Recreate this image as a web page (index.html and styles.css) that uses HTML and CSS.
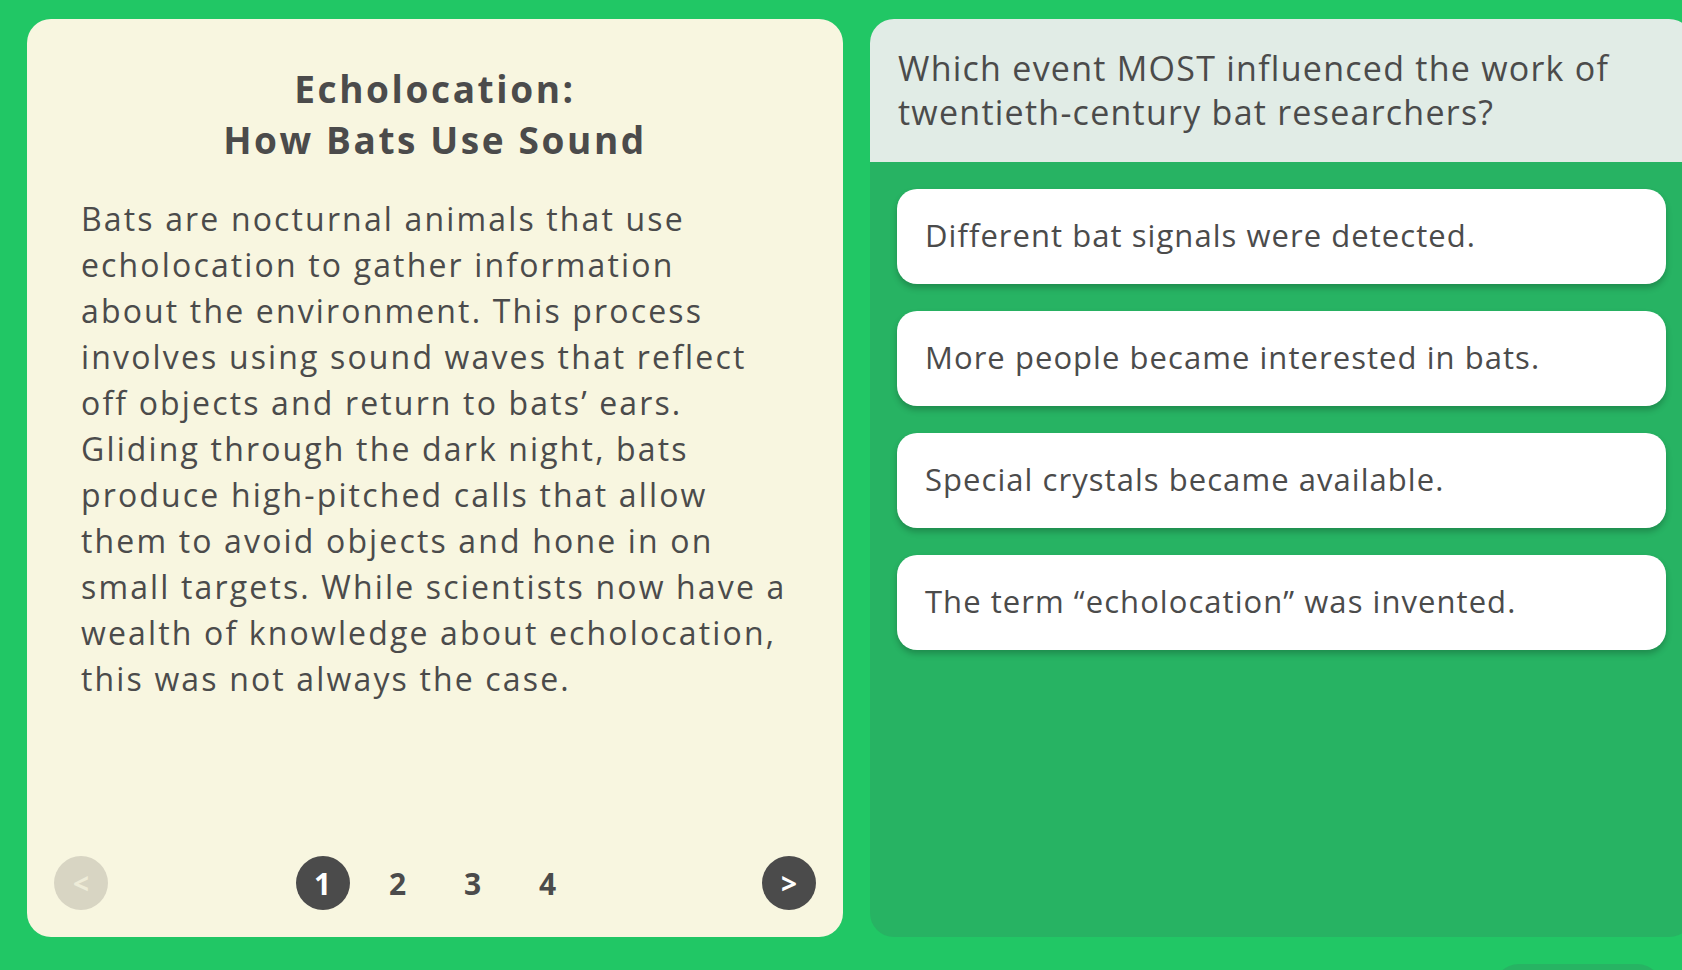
FILE: index.html
```html
<!DOCTYPE html>
<html lang="en">
<head>
<meta charset="utf-8">
<title>Echolocation: How Bats Use Sound</title>
<link rel="stylesheet" href="styles.css">
</head>
<body>
<div class="page">
  <div class="columns">
    <section class="passage">
      <h1 class="passage-title">Echolocation:<br>How Bats Use Sound</h1>
      <p class="passage-text">Bats are nocturnal animals that use<br>echolocation to gather information<br>about the environment. This process<br>involves using sound waves that reflect<br>off objects and return to bats’ ears.<br>Gliding through the dark night, bats<br>produce high-pitched calls that allow<br>them to avoid objects and hone in on<br>small targets. While scientists now have a<br>wealth of knowledge about echolocation,<br>this was not always the case.</p>
      <nav class="pager">
        <button class="pager-arrow pager-arrow--disabled" type="button">&lt;</button>
        <div class="pager-pages">
          <span class="pager-page pager-page--active">1</span>
          <span class="pager-page">2</span>
          <span class="pager-page">3</span>
          <span class="pager-page">4</span>
        </div>
        <button class="pager-arrow" type="button">&gt;</button>
      </nav>
    </section>
    <section class="quiz">
      <div class="quiz-question">Which event MOST influenced the work of twentieth-century bat researchers?</div>
      <div class="quiz-answers">
        <div class="answer">Different bat signals were detected.</div>
        <div class="answer">More people became interested in bats.</div>
        <div class="answer">Special crystals became available.</div>
        <div class="answer">The term “echolocation” was invented.</div>
      </div>
    </section>
  </div>
  <div class="footer">
    <div class="footer-button"></div>
  </div>
</div>
</body>
</html>
```
FILE: styles.css
```css
html, body {
  margin: 0;
  padding: 0;
  overflow: hidden;
}
body {
  background: #21c765;
  font-family: "Open Sans", "Noto Sans", sans-serif;
  color: #4b4b4b;
}
.page {
  display: flex;
  flex-direction: column;
  gap: 27px;
  padding: 19px 27px;
}
.columns {
  display: flex;
  gap: 27px;
}
.passage {
  flex: none;
  width: 816px;
  height: 918px;
  box-sizing: border-box;
  background: #f8f6e0;
  border-radius: 24px;
  padding: 27px;
  display: flex;
  flex-direction: column;
}
.passage-title {
  margin: 17px 0 0;
  text-align: center;
  font-size: 37px;
  line-height: 51px;
  font-weight: 700;
  letter-spacing: 2.6px;
}
.passage-text {
  margin: 31px 0 0;
  padding: 0 0 0 27px;
  font-size: 32px;
  line-height: 46px;
  font-weight: 400;
  letter-spacing: 2.15px;
  white-space: nowrap;
}
.pager {
  margin-top: auto;
  display: flex;
  align-items: center;
  justify-content: space-between;
}
.pager-arrow {
  width: 54px;
  height: 54px;
  border: none;
  border-radius: 50%;
  background: #4b4b4b;
  color: #ffffff;
  font-family: "Open Sans", sans-serif;
  font-size: 28px;
  font-weight: 700;
  padding: 0;
  line-height: 54px;
}
.pager-arrow--disabled {
  background: #d8d5c3;
  color: #eeecd8;
}
.pager-pages {
  display: flex;
  gap: 21px;
}
.pager-page {
  width: 54px;
  height: 54px;
  border-radius: 50%;
  display: flex;
  align-items: center;
  justify-content: center;
  font-size: 30px;
  font-weight: 700;
}
.pager-page--active {
  background: #4b4b4b;
  color: #ffffff;
}
.quiz {
  flex: none;
  width: 823px;
  height: 918px;
  background: #27b363;
  border-radius: 24px;
  overflow: hidden;
}
.quiz-question {
  background: #e1ece6;
  padding: 27px 28px 28px;
  font-size: 34px;
  line-height: 44px;
  font-weight: 500;
  letter-spacing: 1.25px;
}
.quiz-answers {
  display: flex;
  flex-direction: column;
  gap: 27px;
  padding: 27px;
}
.answer {
  height: 95px;
  box-sizing: border-box;
  background: #ffffff;
  border-radius: 20px;
  padding: 0 28px 3px;
  display: flex;
  align-items: center;
  font-size: 31px;
  font-weight: 500;
  letter-spacing: 1.05px;
  box-shadow: 0 4px 6px rgba(0, 0, 0, 0.22);
}
.footer {
  display: flex;
  justify-content: flex-end;
  margin-right: -8px;
}
.footer-button {
  width: 170px;
  height: 56px;
  background: #27b363;
  border-radius: 26px;
}
```
